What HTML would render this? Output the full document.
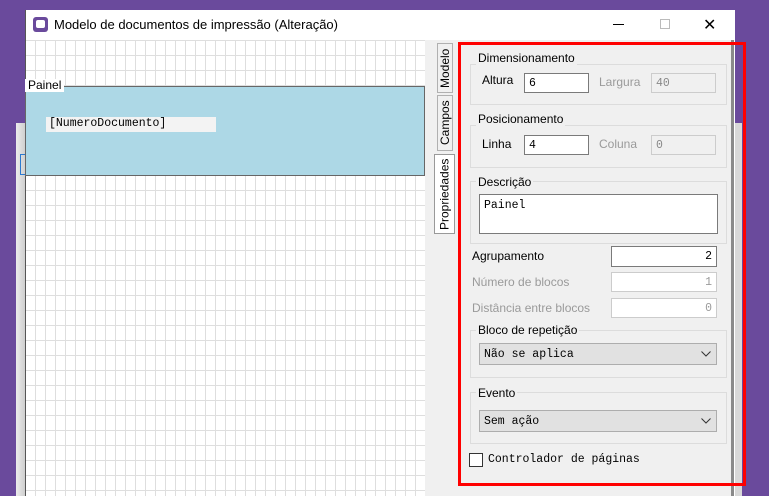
<!DOCTYPE html>
<html><head><meta charset="utf-8"><style>
*{margin:0;padding:0;box-sizing:border-box}
body{width:769px;height:496px;overflow:hidden;background:#6a4a9c;position:relative;font-family:"Liberation Sans",sans-serif;font-size:12px;color:#000}
.a{position:absolute}
.mono{font-family:"Liberation Mono",monospace;font-size:11.5px}
.grp{position:absolute;border:1px solid #dcdcdc;left:470px;width:257px}
.lg{position:absolute;background:#f0f0f0;padding:0 2px;left:476px;font-size:12px}
.inp{position:absolute;background:#fff;border:1px solid #7a7a7a;padding:3px 0 0 4px}
.dis{position:absolute;background:#f0f0f0;border:1px solid #ccc;color:#888;padding:3px 0 0 4px}
.gray{color:#9a9a9a}
.num{position:absolute;background:#fff;text-align:right;padding:3px 4px 0 0}
.sel{position:absolute;left:479px;width:238px;height:22px;background:#e1e1e1;border:1px solid #adadad;padding:4px 0 0 4px}
.sel svg{position:absolute;right:5px;top:7px}
.tab{position:absolute;background:#f0f0f0;border:1px solid #b0b0b0;writing-mode:vertical-rl;transform:rotate(180deg);display:flex;align-items:center;justify-content:center;font-size:12px}
</style></head><body>
<div class="a" style="left:16px;top:123px;width:9px;height:373px;background:linear-gradient(90deg,#ececec,#cfcfcf)"></div>
<div class="a" style="left:734px;top:123px;width:8px;height:373px;background:#d8d8d8"></div>
<div class="a" style="left:25px;top:10px;width:710px;height:486px;background:#fff;border-left:1px solid #555"></div>
<div class="a" style="left:33px;top:17px;width:15px;height:15px;border-radius:3px;background:#6a4a9c"></div>
<div class="a" style="left:36px;top:20px;width:9px;height:8px;border-radius:2px;background:#fff"></div>
<div class="a" style="left:54px;top:17px;font-size:13px">Modelo de documentos de impressão (Alteração)</div>
<div class="a" style="left:613px;top:24px;width:11px;height:1px;background:#000"></div>
<div class="a" style="left:660px;top:19px;width:10px;height:10px;border:1px solid #bbb"></div>
<div class="a" style="left:703px;top:15px;font-size:16px">✕</div>
<div class="a" style="left:25px;top:40px;width:400px;height:456px;background-color:#fff;background-image:linear-gradient(90deg,#dedede 1px,transparent 1px),linear-gradient(#dedede 1px,transparent 1px);background-size:10px 15px;background-position:9px 0;border-left:1px solid #555"></div>
<div class="a" style="left:20px;top:154px;width:6px;height:21px;border:1px solid #2a7ad0;border-right:none"></div>
<div class="a" style="left:25px;top:86px;width:400px;height:90px;background:#add8e6;border:1px solid #666"></div>
<div class="a" style="left:25px;top:79px;width:39px;height:13px;background:#fff;padding-left:3px;line-height:13px">Painel</div>
<div class="a mono" style="left:46px;top:117px;width:170px;height:15px;background:#f3f3f3;padding:0 0 0 3px">[NumeroDocumento]</div>
<div class="a" style="left:425px;top:40px;width:34px;height:456px;background:#f0f0f0"></div>
<div class="tab" style="left:437px;top:43px;width:16px;height:50px">Modelo</div>
<div class="tab" style="left:437px;top:95px;width:16px;height:56px">Campos</div>
<div class="tab" style="left:434px;top:154px;width:21px;height:80px;background:#fff;border-color:#999">Propriedades</div>
<div class="a" style="left:459px;top:40px;width:275px;height:456px;background:#f0f0f0;border-right:3px solid #8a8a8a"></div>
<div class="grp" style="top:64px;height:41px"></div><div class="lg" style="top:51px">Dimensionamento</div>
<div class="a" style="left:482px;top:73px">Altura</div>
<div class="inp mono" style="left:524px;top:73px;width:65px;height:20px">6</div>
<div class="a gray" style="left:599px;top:75px">Largura</div>
<div class="dis mono" style="left:651px;top:73px;width:65px;height:20px">40</div>
<div class="grp" style="top:125px;height:43px"></div><div class="lg" style="top:112px">Posicionamento</div>
<div class="a" style="left:482px;top:137px">Linha</div>
<div class="inp mono" style="left:524px;top:135px;width:65px;height:20px">4</div>
<div class="a gray" style="left:599px;top:137px">Coluna</div>
<div class="dis mono" style="left:651px;top:135px;width:65px;height:20px">0</div>
<div class="grp" style="top:181px;height:63px"></div><div class="lg" style="top:175px">Descrição</div>
<div class="inp mono" style="left:479px;top:194px;width:239px;height:40px;padding:4px 0 0 4px">Painel</div>
<div class="a" style="left:472px;top:249px">Agrupamento</div>
<div class="num mono" style="left:611px;top:246px;width:106px;height:21px;border:1px solid #7a7a7a">2</div>
<div class="a gray" style="left:472px;top:275px">Número de blocos</div>
<div class="num mono gray" style="left:611px;top:272px;width:106px;height:20px;border:1px solid #ccc">1</div>
<div class="a gray" style="left:472px;top:301px">Distância entre blocos</div>
<div class="num mono gray" style="left:611px;top:298px;width:106px;height:20px;border:1px solid #ccc">0</div>
<div class="grp" style="top:330px;height:48px"></div><div class="lg" style="top:323px">Bloco de repetição</div>
<div class="sel mono" style="top:343px">Não se aplica<svg width="10" height="6" viewBox="0 0 10 6"><path d="M0.5 0.5L5 5L9.5 0.5" fill="none" stroke="#333" stroke-width="1"/></svg></div>
<div class="grp" style="top:392px;height:52px"></div><div class="lg" style="top:386px">Evento</div>
<div class="sel mono" style="top:410px">Sem ação<svg width="10" height="6" viewBox="0 0 10 6"><path d="M0.5 0.5L5 5L9.5 0.5" fill="none" stroke="#333" stroke-width="1"/></svg></div>
<div class="a" style="left:469px;top:453px;width:14px;height:14px;border:1px solid #333;background:#fff"></div>
<div class="a mono" style="left:488px;top:453px">Controlador de páginas</div>
<div class="a" style="left:458px;top:42px;width:288px;height:444px;border:3px solid #f00"></div>
</body></html>
